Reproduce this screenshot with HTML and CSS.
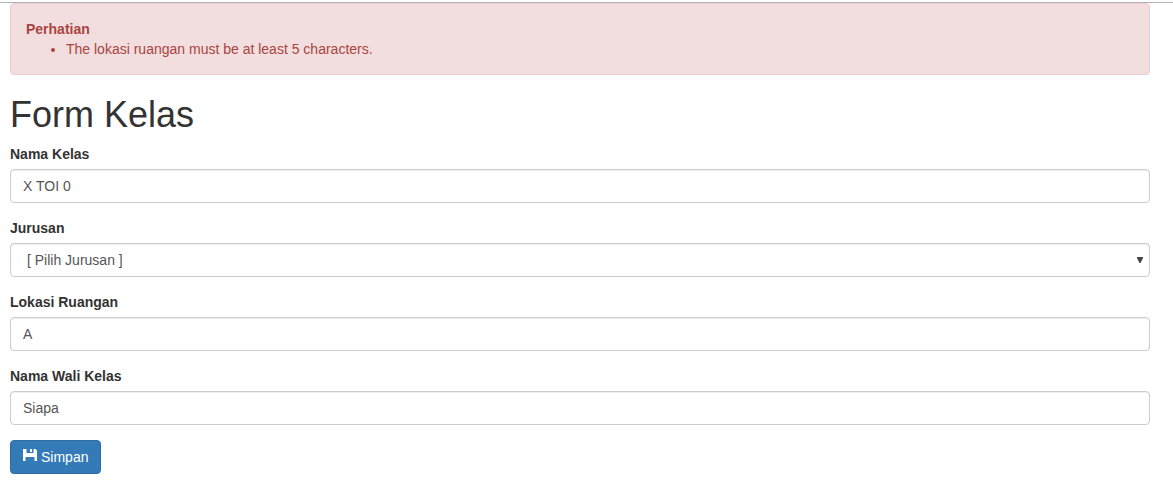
FILE: index.html
```html
<!DOCTYPE html>
<html lang="id">
<head>
    <meta charset="utf-8">
    <title>Form Kelas</title>
    <link rel="stylesheet" href="styles.css">
</head>
<body>
    <div class="topbar"></div>
    <div class="container">
        <div class="alert" role="alert">
            <strong>Perhatian</strong>
            <ul>
                <li>The lokasi ruangan must be at least 5 characters.</li>
            </ul>
        </div>

        <h1>Form Kelas</h1>
        <form>
            <div class="form-group">
                <label for="nama_kelas">Nama Kelas</label>
                <input type="text" class="form-control" id="nama_kelas" name="nama_kelas" value="X TOI 0">
            </div>
            <div class="form-group">
                <label for="jurusan">Jurusan</label>
                <select class="form-control" id="jurusan" name="jurusan">
                    <option value="">[ Pilih Jurusan ]</option>
                </select>
                <svg class="arrow" width="6" height="6" viewBox="0 0 6 6" aria-hidden="true"><path d="M0 0h6v1L3.500 6h-1L0 1z"/></svg>
            </div>
            <div class="form-group">
                <label for="lokasi_ruangan">Lokasi Ruangan</label>
                <input type="text" class="form-control" id="lokasi_ruangan" name="lokasi_ruangan" value="A">
            </div>
            <div class="form-group">
                <label for="wali_kelas">Nama Wali Kelas</label>
                <input type="text" class="form-control" id="wali_kelas" name="wali_kelas" value="Siapa">
            </div>
            <button type="submit" class="btn">
                <svg width="14" height="14" viewBox="0 0 14 14" aria-hidden="true"><path d="M0 2h3.500v4h7V2h2L14 3.500V14h-2.500v-4h-9v4H0zM7 2h2v3H7z"/></svg>
                Simpan
            </button>
        </form>
    </div>
</body>
</html>
```

FILE: styles.css
```css
* {
    box-sizing: border-box;
}

body {
    font-family: "Helvetica Neue", Helvetica, Arial, "Liberation Sans", sans-serif;
    font-size: 14px;
    line-height: 20px;
    background-color: #fff;
    margin: 0;
    color: #333;
}

.topbar {
    height: 3px;
    border-bottom: 1px solid #b5b1b4;
}

.container {
    padding: 0 23px 0 10px;
}

.alert {
    padding: 15px;
    margin-bottom: 20px;
    border: 1px solid #ebccd1;
    border-radius: 4px;
    background-color: #f2dede;
    color: #a94442;
}

.alert ul {
    margin: 0;
    padding-left: 40px;
}

h1 {
    font-size: 36px;
    font-weight: 500;
    line-height: 39px;
    margin: 20px 0 10px;
}

.form-group {
    position: relative;
    margin-bottom: 15px;
}

label {
    display: block;
    font-weight: bold;
    margin-bottom: 5px;
}

.form-control {
    display: block;
    width: 100%;
    height: 34px;
    padding: 6px 12px;
    border: 1px solid #ccc;
    border-radius: 4px;
    background-color: #fff;
    box-shadow: inset 0 1px 1px rgba(0, 0, 0, 0.075);
    font-family: inherit;
    font-size: 14px;
    line-height: 20px;
    color: #555;
}

select.form-control {
    appearance: none;
    padding-left: 16px;
}

/* drop-down arrow */
.arrow {
    position: absolute;
    right: 7px;
    bottom: 14px;
    fill: #444;
    pointer-events: none;
}

.btn {
    display: inline-flex;
    align-items: flex-start;
    gap: 4px;
    padding: 6px 12px;
    border: 1px solid #2e6da4;
    border-radius: 4px;
    background-color: #337ab7;
    color: #fff;
    font-family: inherit;
    font-size: 14px;
    line-height: 20px;
    cursor: pointer;
}

.btn svg {
    fill: #fff;
}

.btn:hover {
    background-color: #286090;
}
```
